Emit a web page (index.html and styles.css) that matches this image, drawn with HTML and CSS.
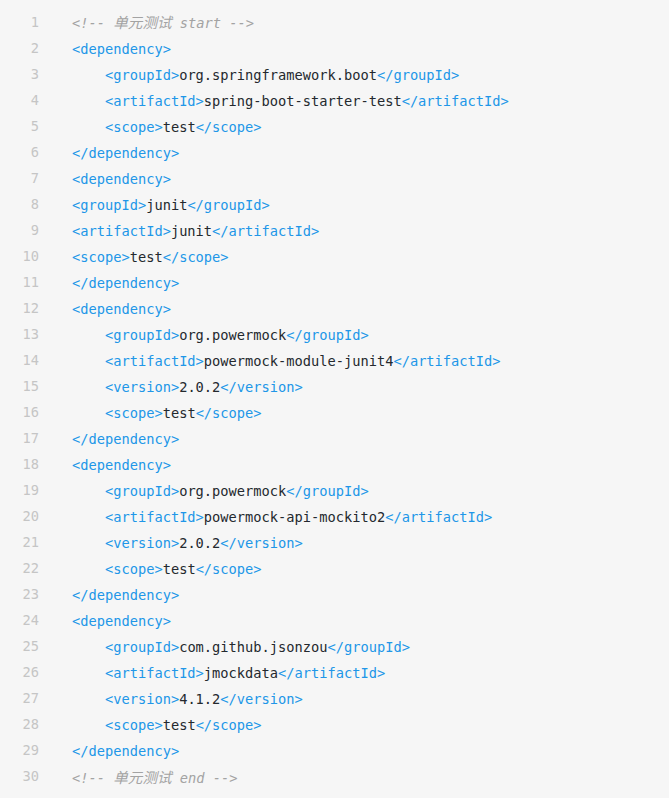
FILE: index.html
```html
<!DOCTYPE html>
<html lang="zh">
<head>
<meta charset="utf-8">
<link rel="stylesheet" href="styles.css">
</head>
<body>
<div class="block">
<div class="gutter">
<span>1</span><span>2</span><span>3</span><span>4</span><span>5</span><span>6</span><span>7</span><span>8</span><span>9</span><span>10</span><span>11</span><span>12</span><span>13</span><span>14</span><span>15</span><span>16</span><span>17</span><span>18</span><span>19</span><span>20</span><span>21</span><span>22</span><span>23</span><span>24</span><span>25</span><span>26</span><span>27</span><span>28</span><span>29</span><span>30</span>
</div>
<pre class="code"><span class="c">&lt;!-- <span class="cjk">单元测试</span> start --&gt;</span>
<span class="t">&lt;dependency&gt;</span>
    <span class="t">&lt;groupId&gt;</span>org.springframework.boot<span class="t">&lt;/groupId&gt;</span>
    <span class="t">&lt;artifactId&gt;</span>spring-boot-starter-test<span class="t">&lt;/artifactId&gt;</span>
    <span class="t">&lt;scope&gt;</span>test<span class="t">&lt;/scope&gt;</span>
<span class="t">&lt;/dependency&gt;</span>
<span class="t">&lt;dependency&gt;</span>
<span class="t">&lt;groupId&gt;</span>junit<span class="t">&lt;/groupId&gt;</span>
<span class="t">&lt;artifactId&gt;</span>junit<span class="t">&lt;/artifactId&gt;</span>
<span class="t">&lt;scope&gt;</span>test<span class="t">&lt;/scope&gt;</span>
<span class="t">&lt;/dependency&gt;</span>
<span class="t">&lt;dependency&gt;</span>
    <span class="t">&lt;groupId&gt;</span>org.powermock<span class="t">&lt;/groupId&gt;</span>
    <span class="t">&lt;artifactId&gt;</span>powermock-module-junit4<span class="t">&lt;/artifactId&gt;</span>
    <span class="t">&lt;version&gt;</span>2.0.2<span class="t">&lt;/version&gt;</span>
    <span class="t">&lt;scope&gt;</span>test<span class="t">&lt;/scope&gt;</span>
<span class="t">&lt;/dependency&gt;</span>
<span class="t">&lt;dependency&gt;</span>
    <span class="t">&lt;groupId&gt;</span>org.powermock<span class="t">&lt;/groupId&gt;</span>
    <span class="t">&lt;artifactId&gt;</span>powermock-api-mockito2<span class="t">&lt;/artifactId&gt;</span>
    <span class="t">&lt;version&gt;</span>2.0.2<span class="t">&lt;/version&gt;</span>
    <span class="t">&lt;scope&gt;</span>test<span class="t">&lt;/scope&gt;</span>
<span class="t">&lt;/dependency&gt;</span>
<span class="t">&lt;dependency&gt;</span>
    <span class="t">&lt;groupId&gt;</span>com.github.jsonzou<span class="t">&lt;/groupId&gt;</span>
    <span class="t">&lt;artifactId&gt;</span>jmockdata<span class="t">&lt;/artifactId&gt;</span>
    <span class="t">&lt;version&gt;</span>4.1.2<span class="t">&lt;/version&gt;</span>
    <span class="t">&lt;scope&gt;</span>test<span class="t">&lt;/scope&gt;</span>
<span class="t">&lt;/dependency&gt;</span>
<span class="c">&lt;!-- <span class="cjk">单元测试</span> end --&gt;</span></pre>
</div>
</body>
</html>
```

FILE: styles.css
```css
html, body {
  margin: 0;
  padding: 0;
  background: #f6f6f6;
}
.block {
  display: flex;
  align-items: flex-start;
  padding: 9px 0 0 0;
  height: 789px;
  background: #f6f6f6;
  font-family: "DejaVu Sans Mono", "Liberation Mono", monospace;
  font-size: 13.7px;
  line-height: 26px;
}
.gutter {
  display: flex;
  flex-direction: column;
  align-items: flex-end;
  width: 39px;
  color: #c5c5c5;
  flex: none;
}
.gutter span {
  height: 26px;
}
.code {
  margin: 0 0 0 33px;
  font: inherit;
  color: #24292e;
  white-space: pre;
}
.t {
  color: #2196e8;
}
.c {
  color: #a3a3a3;
  font-style: italic;
}
.cjk {
  font-family: "Noto Sans CJK SC", sans-serif;
  font-size: 14.6px;
}
```
